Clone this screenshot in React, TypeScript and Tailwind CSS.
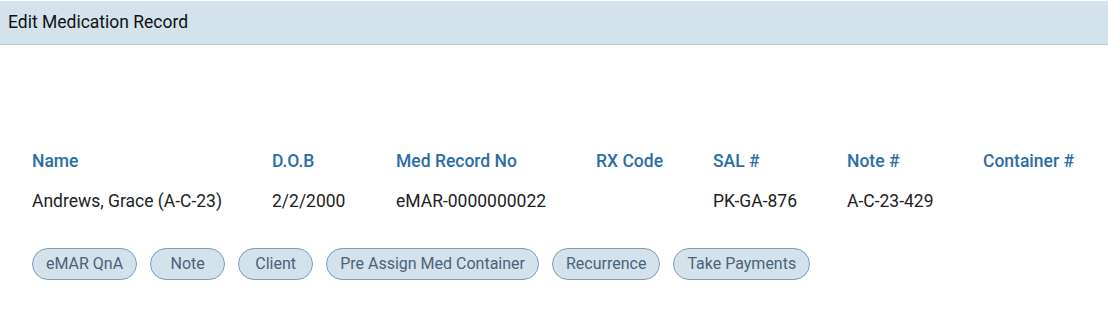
const columns = [
  { label: 'Name', value: 'Andrews, Grace (A-C-23)', width: 'w-[240px]' },
  { label: 'D.O.B', value: '2/2/2000', width: 'w-[124px]' },
  { label: 'Med Record No', value: 'eMAR-0000000022', width: 'w-[200px]' },
  { label: 'RX Code', value: '', width: 'w-[117px]' },
  { label: 'SAL #', value: 'PK-GA-876', width: 'w-[134px]' },
  { label: 'Note #', value: 'A-C-23-429', width: 'w-[136px]' },
  { label: 'Container #', value: '', width: 'w-[110px]' },
];

const actions = ['eMAR QnA', 'Note', 'Client', 'Pre Assign Med Container', 'Recurrence', 'Take Payments'];

export default function App() {
  return (
    <div className="min-h-[313px] bg-white font-['Roboto',sans-serif]">
      <div className="mt-px h-[44px] flex items-center px-2 bg-[#d4e2eb] border-b border-[#c4ccd2]">
        <h1 className="text-[17.5px] text-[#111] leading-none">Edit Medication Record</h1>
      </div>

      <div className="pl-8 pt-[106px]">
        <div className="flex">
          {columns.map((c) => (
            <div key={c.label} className={`${c.width} shrink-0`}>
              <div className="text-[17.5px] font-medium text-[#2b6ea5] leading-[20px]">{c.label}</div>
              <div className="mt-5 text-[17.5px] text-[#222] leading-[20px] h-5">{c.value}</div>
            </div>
          ))}
        </div>

        <div className="mt-[37px] flex gap-[13px]">
          {actions.map((a) => (
            <button
              key={a}
              className="h-8 min-w-[75px] px-[13px] rounded-full border border-[#7f9db5] bg-[#d4e2eb] text-[16px] text-[#4b6479] leading-none"
            >
              {a}
            </button>
          ))}
        </div>
      </div>
    </div>
  );
}
